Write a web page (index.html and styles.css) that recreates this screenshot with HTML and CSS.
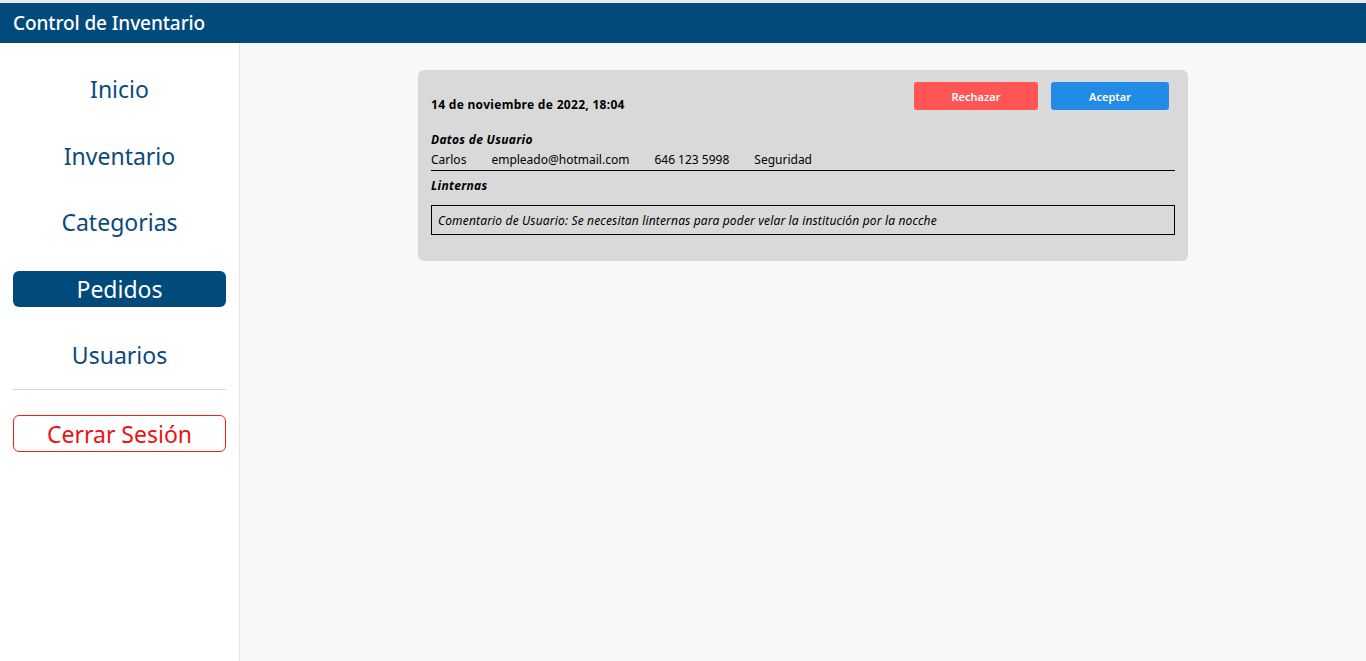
FILE: index.html
```html
<!DOCTYPE html>
<html lang="es">
<head>
<meta charset="utf-8">
<title>Control de Inventario</title>
<link rel="stylesheet" href="styles.css">
</head>
<body>
<header class="topbar">
  <span class="brand">Control de Inventario</span>
</header>
<div class="layout">
  <aside class="sidebar">
    <nav class="nav">
      <a class="nav-item" href="#">Inicio</a>
      <a class="nav-item" href="#">Inventario</a>
      <a class="nav-item" href="#">Categorias</a>
      <a class="nav-item active" href="#">Pedidos</a>
      <a class="nav-item" href="#">Usuarios</a>
    </nav>
    <hr class="divider">
    <button class="logout">Cerrar Sesión</button>
  </aside>
  <main class="main">
    <section class="card">
      <div class="card-head">
        <div class="date">14 de noviembre de 2022, 18:04</div>
        <div class="actions">
          <button class="btn reject">Rechazar</button>
          <button class="btn accept">Aceptar</button>
        </div>
      </div>
      <div class="label">Datos de Usuario</div>
      <div class="user-row">
        <span>Carlos</span>
        <span>empleado@hotmail.com</span>
        <span>646 123 5998</span>
        <span>Seguridad</span>
      </div>
      <div class="label item">Linternas</div>
      <div class="comment">Comentario de Usuario: Se necesitan linternas para poder velar la institución por la nocche</div>
    </section>
  </main>
</div>
</body>
</html>
```
FILE: styles.css
```css
* { box-sizing: border-box; }
html, body { margin: 0; padding: 0; }
body {
  font-family: "Noto Sans", "Open Sans", sans-serif;
  background: #f7f8fa;
  color: #000;
  height: 661px;
  overflow: hidden;
  border-top: 3px solid #e8e8e8;
}
.topbar {
  height: 40px;
  background: #004a7c;
  display: flex;
  align-items: center;
  padding-left: 13px;
}
.brand {
  color: #fff;
  font-size: 19px;
  font-weight: 500;
  letter-spacing: -0.1px;
}
.layout {
  display: flex;
  height: calc(661px - 43px);
}
.sidebar {
  width: 240px;
  flex: 0 0 240px;
  background: #fff;
  border-right: 1px solid #e4e4e4;
  padding: 28px 13px 0 13px;
  display: flex;
  flex-direction: column;
}
.nav {
  display: flex;
  flex-direction: column;
  gap: 30.5px;
}
.nav-item {
  display: flex;
  align-items: center;
  justify-content: center;
  height: 36px;
  border-radius: 6px;
  color: #0a4a7c;
  text-decoration: none;
  font-size: 23px;
}
.nav-item.active {
  background: #004a7c;
  color: #fff;
}
.divider {
  border: 0;
  border-top: 1px solid #d6d6d6;
  margin: 16px 0 25px 0;
  width: 100%;
}
.logout {
  height: 37px;
  background: #fff;
  border: 1px solid #ff1a1a;
  border-radius: 6px;
  color: #ee1111;
  font-family: inherit;
  font-size: 23px;
  padding: 0;
}
.main {
  flex: 1;
  display: flex;
  justify-content: center;
  align-items: flex-start;
  padding-top: 27px;
}
.card {
  width: 770px;
  background: #d9d9d9;
  border-radius: 6px;
  padding: 12px 13px 26px 13px;
  font-size: 12px;
}
.card-head {
  display: flex;
  justify-content: space-between;
  align-items: flex-start;
}
.date {
  font-weight: bold;
  padding-top: 15px;
  line-height: 16px;
  letter-spacing: 0.3px;
}
.actions {
  display: flex;
  gap: 13px;
  margin-right: 6px;
}
.btn {
  height: 28px;
  border: 0;
  border-radius: 3px;
  color: #fff;
  font-family: inherit;
  font-size: 11px;
  font-weight: 600;
  padding: 0;
}
.reject { width: 124px; background: #ff5555; }
.accept { width: 118px; background: #228be6; }
.label {
  font-weight: bold;
  font-style: italic;
  line-height: 16px;
  margin-top: 19px;
  letter-spacing: 0.3px;
}
.user-row {
  display: flex;
  gap: 25px;
  line-height: 16px;
  margin-top: 4px;
  padding-bottom: 2px;
  border-bottom: 1px solid #000;
}
.label.item { margin-top: 7px; }
.comment {
  margin-top: 11px;
  border: 1px solid #000;
  height: 30px;
  padding: 0 6px;
  display: flex;
  align-items: center;
  font-style: italic;
  letter-spacing: 0.16px;
}
```
